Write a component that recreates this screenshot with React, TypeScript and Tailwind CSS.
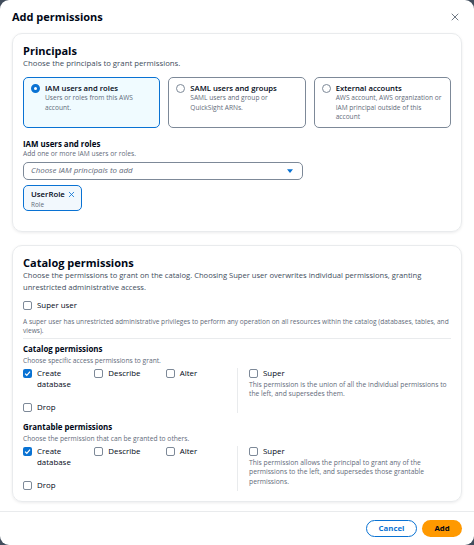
import { X } from 'lucide-react';

type Opt = { title: string; desc: string; selected?: boolean };

const principals: Opt[] = [
  { title: 'IAM users and roles', desc: 'Users or roles from this AWS account.', selected: true },
  { title: 'SAML users and groups', desc: 'SAML users and group or QuickSight ARNs.' },
  { title: 'External accounts', desc: 'AWS account, AWS organization or IAM principal outside of this account' },
];

function Radio({ on }: { on?: boolean }) {
  return on ? (
    <span className="mt-[1px] h-[9px] w-[9px] shrink-0 rounded-full border-[3px] border-[#0972d3] bg-white" />
  ) : (
    <span className="mt-[1px] h-[9px] w-[9px] shrink-0 rounded-full border border-[#7d8998] bg-white" />
  );
}

function Checkbox({ on }: { on?: boolean }) {
  if (on) {
    return (
      <span className="mt-[1px] flex h-[9px] w-[9px] shrink-0 items-center justify-center rounded-[2px] bg-[#0972d3]">
        <svg viewBox="0 0 10 10" className="h-[7px] w-[7px]" fill="none" stroke="white" strokeWidth={1.8}>
          <path d="M1.5 5.2 4 7.6 8.6 2.4" />
        </svg>
      </span>
    );
  }
  return <span className="mt-[1px] h-[9px] w-[9px] shrink-0 rounded-[2px] border border-[#7d8998] bg-white" />;
}

function Check({ label, on }: { label: string; on?: boolean }) {
  return (
    <div className="flex items-start gap-[5px] pr-[12px] text-[7.9px] leading-[11px] text-[#000716]">
      <Checkbox on={on} />
      <span>{label}</span>
    </div>
  );
}

function PermGroup({ title, hint, superDesc }: { title: string; hint: string; superDesc: string }) {
  return (
    <div>
      <div className="text-[7.9px] font-bold leading-[11px] text-[#000716]">{title}</div>
      <div className="mt-[1px] text-[6.7px] leading-[9px] text-[#5f6b7a]">{hint}</div>
      <div className="mt-[3px] flex">
        <div className="w-[214px] shrink-0">
          <div className="grid grid-cols-3">
            <Check label="Create database" on />
            <Check label="Describe" />
            <Check label="Alter" />
          </div>
          <div className="mt-[12px]">
            <Check label="Drop" />
          </div>
        </div>
        <div className="border-l border-[#e9ebed] pl-[11px]">
          <Check label="Super" />
          <div className="mt-[1px] text-[6.75px] leading-[9.3px] text-[#5f6b7a]">{superDesc}</div>
        </div>
      </div>
    </div>
  );
}

export default function App() {
  return (
    <div className="h-[545px] w-[474px] bg-[#414d5c]">
      <div className="flex h-full flex-col rounded-[9px] bg-white font-['Open_Sans',sans-serif] text-[#000716]">
        {/* header */}
        <div className="flex h-[33px] shrink-0 items-start justify-between pl-[12px] pr-[13px] pt-[9px]">
          <h1 className="text-[11px] font-bold leading-[16px]">Add permissions</h1>
          <X className="mt-[2px] h-[12px] w-[12px] text-[#414d5c]" strokeWidth={1.5} />
        </div>

        <div className="flex flex-col gap-[13px] px-[12px]">
          {/* Principals */}
          <section className="rounded-[10px] border border-[#e9ebed] px-[10px] pb-[20px] pt-[10px] shadow-[0_1px_3px_rgba(0,7,22,0.08)]">
            <h2 className="text-[11px] font-bold leading-[14px]">Principals</h2>
            <p className="text-[7.8px] leading-[10px] text-[#414d5c]">Choose the principals to grant permissions.</p>
            <div className="mt-[9px] grid grid-cols-3 gap-[8px]">
              {principals.map((p) => (
                <div
                  key={p.title}
                  className={`flex h-[51px] gap-[5px] rounded-[5px] border pl-[7px] pr-[6px] pt-[5px] ${
                    p.selected ? 'border-[#0972d3] bg-[#f0fbff]' : 'border-[#7d8998] bg-white'
                  }`}
                >
                  <Radio on={p.selected} />
                  <div>
                    <div className="text-[7.7px] font-semibold leading-[10px]">{p.title}</div>
                    <div className="text-[6.6px] leading-[9.5px] text-[#5f6b7a]">{p.desc}</div>
                  </div>
                </div>
              ))}
            </div>

            <div className="mt-[11px] text-[7.9px] font-bold leading-[10px]">IAM users and roles</div>
            <div className="text-[6.7px] leading-[10px] text-[#5f6b7a]">Add one or more IAM users or roles.</div>
            <div className="mt-[3px] flex h-[18px] w-[280px] items-center justify-between rounded-[5px] border border-[#7d8998] pl-[7px] pr-[9px]">
              <span className="text-[7.9px] italic text-[#5f6b7a]">Choose IAM principals to add</span>
              <svg viewBox="0 0 8 5" className="h-[4px] w-[6px]" fill="#0972d3">
                <path d="M0 0h8L4 5z" />
              </svg>
            </div>
            <div className="mt-[5px] flex h-[26px] w-[59px] items-start justify-between rounded-[5px] border border-[#0972d3] bg-[#f2f8fd] pl-[7px] pr-[5px] pt-[3px]">
              <div>
                <div className="text-[7.8px] font-semibold leading-[11px]">UserRole</div>
                <div className="text-[6.4px] leading-[9px] text-[#5f6b7a]">Role</div>
              </div>
              <X className="mt-[1px] h-[9px] w-[9px] text-[#0972d3]" strokeWidth={2.2} />
            </div>
          </section>

          {/* Catalog permissions */}
          <section className="rounded-[10px] border border-[#e9ebed] px-[10px] pb-[10px] pt-[10px] shadow-[0_1px_3px_rgba(0,7,22,0.08)]">
            <h2 className="text-[11px] font-bold leading-[13px]">Catalog permissions</h2>
            <p className="text-[7.6px] leading-[12px] text-[#414d5c]">
              Choose the permissions to grant on the catalog. Choosing Super user overwrites individual permissions, granting
              unrestricted administrative access.
            </p>
            <div className="mt-[7px]">
              <Check label="Super user" />
            </div>
            <p className="mt-[6px] text-[6.6px] leading-[9px] text-[#5f6b7a]">
              A super user has unrestricted administrative privileges to perform any operation on all resources within the
              catalog (databases, tables, and views).
            </p>
            <div className="mt-[3px] border-t border-[#e9ebed]" />
            <div className="mt-[5px] flex flex-col gap-[9px]">
              <PermGroup
                title="Catalog permissions"
                hint="Choose specific access permissions to grant."
                superDesc="This permission is the union of all the individual permissions to the left, and supersedes them."
              />
              <PermGroup
                title="Grantable permissions"
                hint="Choose the permission that can be granted to others."
                superDesc="This permission allows the principal to grant any of the permissions to the left, and supersedes those grantable permissions."
              />
            </div>
          </section>
        </div>

        {/* footer */}
        <div className="mt-auto flex h-[34px] items-start justify-end gap-[5px] border-t border-[#e9ebed] pr-[12px] pt-[8px]">
          <button className="h-[17px] w-[51px] rounded-full border border-[#0972d3] text-[7.8px] font-bold text-[#0972d3]">
            Cancel
          </button>
          <button className="h-[17px] w-[40px] rounded-full bg-[#ff9900] text-[7.8px] font-bold text-[#000716]">Add</button>
        </div>
      </div>
    </div>
  );
}
